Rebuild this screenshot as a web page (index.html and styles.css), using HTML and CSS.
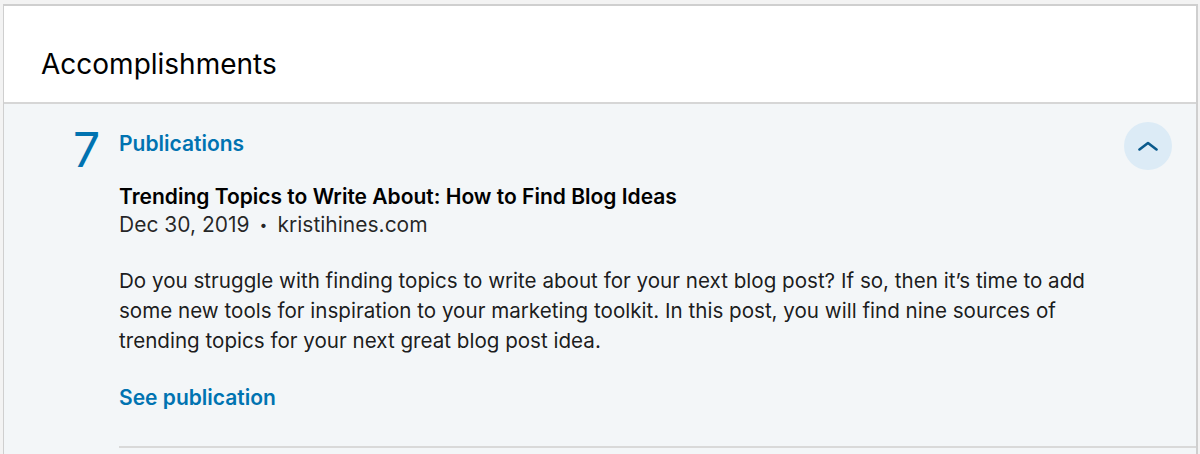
FILE: index.html
```html
<!DOCTYPE html>
<html lang="en">
<head>
<meta charset="utf-8">
<title>Accomplishments</title>
<link rel="stylesheet" href="styles.css">
</head>
<body>
<div class="page">
  <section class="card">
    <header class="card-header">
      <h2 class="card-title">Accomplishments</h2>
    </header>
    <div class="acc">
      <div class="acc-count">7</div>
      <div class="acc-main">
        <div class="acc-head">
          <h3 class="acc-type">Publications</h3>
          <button class="toggle" type="button" aria-label="Collapse">
            <svg width="20" height="10" viewBox="0 0 20 10"><path d="M1.5 8.5 L10 2 L18.5 8.5" fill="none" stroke="#0a5a8c" stroke-width="2.6" stroke-linecap="round" stroke-linejoin="round"/></svg>
          </button>
        </div>
        <div class="pub">
          <h4 class="pub-title">Trending Topics to Write About: How to Find Blog Ideas</h4>
          <div class="pub-meta"><span>Dec 30, 2019</span><span class="dot">•</span><span>kristihines.com</span></div>
          <p class="pub-desc">Do you struggle with finding topics to write about for your next blog post? If so, then it’s time to add some new tools for inspiration to your marketing toolkit. In this post, you will find nine sources of trending topics for your next great blog post idea.</p>
          <a class="pub-link" href="#">See publication</a>
        </div>
        <div class="divider"></div>
      </div>
    </div>
  </section>
</div>
</body>
</html>
```

FILE: styles.css
```css
html, body {
  margin: 0;
  padding: 0;
  background: #f3f3f3;
}
body {
  font-family: Inter, "Open Sans", "Liberation Sans", sans-serif;
  color: rgba(0, 0, 0, 0.9);
}
.page {
  padding: 4px 2px 0 3px;
  height: 450px;
  overflow: hidden;
}
.card {
  background: #fff;
  border: 1px solid #cfcfcf;
  border-top-width: 2px;
  border-right-width: 2px;
  border-bottom: none;
  height: 460px;
}
.card-header {
  height: 96px;
  border-bottom: 2px solid #d6d6d6;
  padding: 0 0 0 37px;
  display: flex;
  align-items: flex-end;
}
.card-title {
  margin: 0 0 22px 0;
  font-size: 28px;
  line-height: 32px;
  font-weight: 400;
  color: #000;
}
.acc {
  background: #f3f6f8;
  display: flex;
  align-items: flex-start;
  padding: 18px 0 0 66px;
  height: 400px;
}
.acc-count {
  width: 49px;
  flex: none;
  font-size: 48px;
  line-height: 56px;
  font-weight: 400;
  color: #0073b1;
  padding-left: 3px;
  box-sizing: border-box;
}
.acc-main {
  flex: 1;
  min-width: 0;
}
.acc-head {
  display: flex;
  justify-content: space-between;
  align-items: flex-start;
  padding-right: 24px;
}
.acc-type {
  margin: 10px 0 0 0;
  font-size: 21px;
  line-height: 24px;
  font-weight: 600;
  color: #0073b1;
}
.toggle {
  flex: none;
  width: 48px;
  height: 48px;
  border-radius: 50%;
  border: none;
  background: #dcebf6;
  display: flex;
  align-items: center;
  justify-content: center;
  padding: 0;
}
.pub {
  margin-top: 14px;
  padding-right: 86px;
}
.pub-title {
  margin: 0;
  font-size: 21px;
  line-height: 26px;
  font-weight: 600;
  color: #000;
}
.pub-meta {
  margin-top: 2px;
  font-size: 21px;
  line-height: 26px;
  color: rgba(0, 0, 0, 0.85);
}
.dot {
  font-size: 14px;
  margin: 0 10px;
  vertical-align: 2px;
}
.pub-desc {
  margin: 28px 0 0 0;
  font-size: 20.6px;
  line-height: 30px;
  color: rgba(0, 0, 0, 0.9);
}
.pub-link {
  display: inline-block;
  margin-top: 30px;
  font-size: 21px;
  line-height: 24px;
  font-weight: 600;
  color: #0073b1;
  text-decoration: none;
}
.divider {
  margin-top: 36px;
  height: 2px;
  background: #d9d9d9;
}
```
